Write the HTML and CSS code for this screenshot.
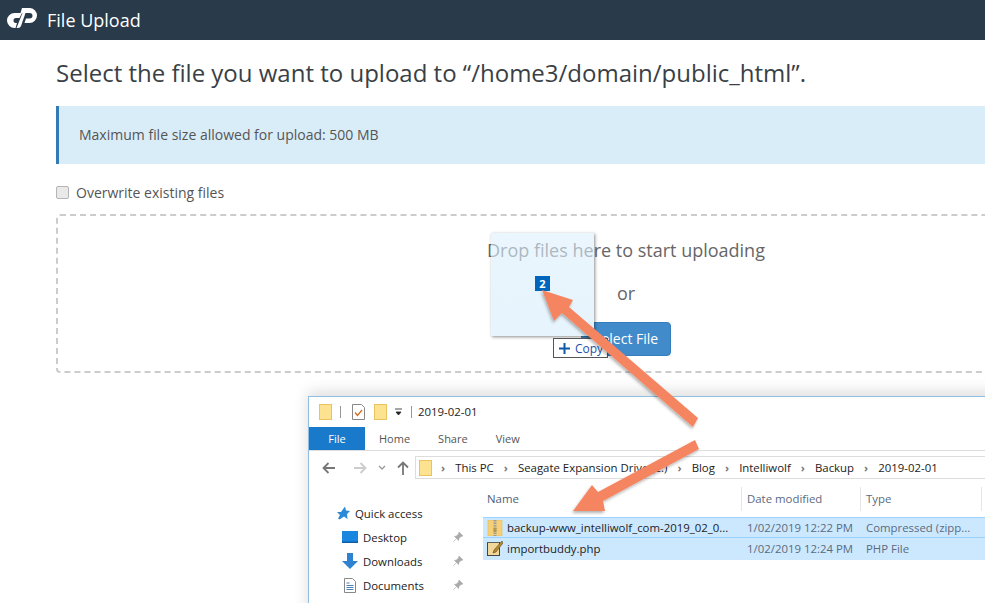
FILE: index.html
```html
<!DOCTYPE html>
<html lang="en">
<head>
    <meta charset="UTF-8">
    <title>File Upload</title>
    <link rel="stylesheet" href="styles.css">
</head>
<body>
    <header class="topbar">
        <svg class="logo" width="30" height="20" viewBox="0 0 30 20">
            <path fill="#fff" d="M15 5l-2.500 5H9a2.500 2.500 0 0 0 0 5h1l-1.500 5h-1a7.500 7.500 0 0 1 0-15z"/>
            <path fill="#fff" d="M15 0h7.500a7.500 7.500 0 0 1 0 15h-5l1.500-4.500h3.500a3 2.750 0 0 0 0-5.500h-4L14 18q-.7 2-3 2H9.500l6-15h-2z"/>
        </svg>
        <span class="topbar-title">File Upload</span>
    </header>

    <main class="content">
        <h1 class="page-title">Select the file you want to upload to “/home3/domain/public_html”.</h1>
        <div class="notice">Maximum file size allowed for upload: 500 MB</div>
        <label class="overwrite"><input type="checkbox" class="overwrite-box"> Overwrite existing files</label>
        <div class="dropzone">
            <div class="drop-text">Drop files here to start uploading</div>
            <div class="drop-or">or</div>
            <button class="select-btn">Select File</button>
        </div>
    </main>

    <div class="drag-ghost"><span class="drag-count">2</span></div>
    <div class="copy-tip">
        <svg width="11" height="11" viewBox="0 0 11 11"><path d="M5.500 0v11M0 5.500h11" stroke="#0a5aa8" stroke-width="2"/></svg>
        Copy
    </div>

    <section class="explorer">
        <div class="qat">
            <svg width="13" height="16" viewBox="0 0 13 16"><rect x=".5" y=".5" width="12" height="15" fill="#fde28f" stroke="#e8c35f"/></svg>
            <span class="qat-sep"></span>
            <svg class="qat-check" width="13" height="16" viewBox="0 0 13 16"><path d="M.5.5h9l3 3v12H.5z" fill="#fff" stroke="#888"/><path d="M3 8.500l2.500 3L10 6" fill="none" stroke="#d2691e" stroke-width="1.200"/></svg>
            <svg class="qat-folder" width="13" height="16" viewBox="0 0 13 16"><rect x=".5" y=".5" width="12" height="15" fill="#fde28f" stroke="#e8c35f"/></svg>
            <svg width="8" height="8" viewBox="0 0 8 8"><path d="M0 1h7M1 4h5l-2.500 3z" fill="#222" stroke="#222" stroke-width=".8"/></svg>
            <span class="qat-sep"></span>
            <span class="qat-title">2019-02-01</span>
        </div>
        <div class="tabs">
            <span class="tab tab-file">File</span>
            <span class="tab">Home</span>
            <span class="tab">Share</span>
            <span class="tab">View</span>
        </div>
        <div class="navbar">
            <div class="nav-btns">
                <svg width="14" height="12" viewBox="0 0 14 12"><path d="M13 6H2M6.500 1L1.500 6l5 5" fill="none" stroke="#777" stroke-width="1.800"/></svg>
                <svg class="nav-forward" width="14" height="12" viewBox="0 0 14 12"><path d="M1 6h11M7.500 1l5 5-5 5" fill="none" stroke="#ccc" stroke-width="1.800"/></svg>
                <svg width="8" height="6" viewBox="0 0 8 6"><path d="M1 1l3 3 3-3" fill="none" stroke="#999" stroke-width="1.300"/></svg>
                <svg width="12" height="14" viewBox="0 0 12 14"><path d="M6 14V2M1 6.500l5-5 5 5" fill="none" stroke="#777" stroke-width="1.800"/></svg>
            </div>
            <div class="address">
                <svg class="address-folder" width="13" height="16" viewBox="0 0 13 16"><rect x=".5" y=".5" width="12" height="15" fill="#fde28f" stroke="#e8c35f"/></svg>
                <span class="crumb-sep">›</span><span>This PC</span>
                <span class="crumb-sep">›</span><span>Seagate Expansion Drive (E:)</span>
                <span class="crumb-sep">›</span><span>Blog</span>
                <span class="crumb-sep">›</span><span>Intelliwolf</span>
                <span class="crumb-sep">›</span><span>Backup</span>
                <span class="crumb-sep">›</span><span>2019-02-01</span>
            </div>
        </div>
        <div class="panes">
            <nav class="tree">
                <div class="tree-head">
                    <svg width="14" height="14" viewBox="0 0 14 14"><path d="M9 .5l1 4 4 .5-3 3 .5 5L8 10.500 3.500 13.500 2 12.500l2-3.500L1 6h4z" fill="#2b8ad9"/></svg>
                    Quick access
                </div>
                <div class="tree-item">
                    <svg width="16" height="12" viewBox="0 0 16 12"><rect width="16" height="12" fill="#1a86e0"/><rect y="10.500" width="16" height="1.500" fill="#0f5fa8"/></svg>
                    <span class="tree-label">Desktop</span>
                    <svg class="pin" width="10" height="10" viewBox="0 0 10 10"><path d="M6 0l4 4-2 .5-2 2-.5 2L1.500 4.500l2-.5 2-2zM3 7L.5 9.500" fill="#aaa" stroke="#aaa" stroke-width=".6"/></svg>
                </div>
                <div class="tree-item">
                    <svg width="16" height="16" viewBox="0 0 16 16"><path d="M5 0h6v8h5l-8 8-8-8h5z" fill="#2e82d0"/></svg>
                    <span class="tree-label">Downloads</span>
                    <svg class="pin" width="10" height="10" viewBox="0 0 10 10"><path d="M6 0l4 4-2 .5-2 2-.5 2L1.500 4.500l2-.5 2-2zM3 7L.5 9.500" fill="#aaa" stroke="#aaa" stroke-width=".6"/></svg>
                </div>
                <div class="tree-item">
                    <svg width="16" height="15" viewBox="0 0 16 15"><path d="M2.500.5h8l3 3v11h-11z" fill="#fff" stroke="#888"/><path d="M4.500 5h3M4.500 7.500h7M4.500 9.500h7M4.500 11.500h7" stroke="#4a7fb5"/></svg>
                    <span class="tree-label">Documents</span>
                    <svg class="pin" width="10" height="10" viewBox="0 0 10 10"><path d="M6 0l4 4-2 .5-2 2-.5 2L1.500 4.500l2-.5 2-2zM3 7L.5 9.500" fill="#aaa" stroke="#aaa" stroke-width=".6"/></svg>
                </div>
            </nav>
            <div class="files">
                <div class="file-row file-header">
                    <span class="col col-name">Name</span>
                    <span class="col col-date">Date modified</span>
                    <span class="col col-type">Type</span>
                </div>
                <div class="file-row file-selected file-focus">
                    <span class="col col-name">
                        <svg width="16" height="16" viewBox="0 0 16 16"><rect x="1" width="14" height="16" fill="#f5d078" stroke="#e3b95a" stroke-width=".6"/><path d="M8 0v16" stroke="#9b9b9b" stroke-width="3" stroke-dasharray="1.500 1"/><rect x="6.500" y="8" width="3" height="4" fill="#b09a50"/></svg>
                        backup-www_intelliwolf_com-2019_02_0...
                    </span>
                    <span class="col col-date">1/02/2019 12:22 PM</span>
                    <span class="col col-type">Compressed (zipp...</span>
                </div>
                <div class="file-row file-selected file-plain">
                    <span class="col col-name">
                        <svg width="16" height="16" viewBox="0 0 16 16"><rect x=".5" y="2.500" width="12" height="13" fill="#f2d79a" stroke="#444"/><path d="M.5 2.500h12" stroke="#777" stroke-dasharray="1 1"/><path d="M15 1L7 10l-1 3 3-1 7-9z" fill="#b5892f" stroke="#5a4a1a" stroke-width=".6"/></svg>
                        importbuddy.php
                    </span>
                    <span class="col col-date">1/02/2019 12:24 PM</span>
                    <span class="col col-type">PHP File</span>
                </div>
            </div>
        </div>
    </section>

    <svg class="arrows" width="985" height="603" viewBox="0 0 985 603">
        <defs>
            <filter id="arrow-shadow" x="-10%" y="-10%" width="120%" height="120%">
                <feDropShadow dx="-1" dy="2" stdDeviation="1.500" flood-color="#000" flood-opacity=".3"/>
            </filter>
        </defs>
        <polygon class="arrow" filter="url(#arrow-shadow)" points="542,290 573,300 569,307 698,418 693,427 562,313 554,321"/>
        <polygon class="arrow" filter="url(#arrow-shadow)" points="573,511 592,485 598,492 695,440 699,449 603,501 605,511"/>
    </svg>
</body>
</html>
```

FILE: styles.css
```css
html, body {
    margin: 0;
    height: 100%;
    overflow: hidden;
}

body {
    position: relative;
    background: #fff;
    font-family: "Open Sans", sans-serif;
    color: #333;
}

.topbar {
    display: flex;
    align-items: center;
    height: 40px;
    padding-left: 7px;
    background: #293a4a;
    color: #fff;
}

.logo {
    margin: 0 10px 4px 0;
}

.topbar-title {
    font-size: 18px;
}

.content {
    width: 1140px;
    margin-left: 56px;
}

.page-title {
    margin: 0;
    padding-top: 16px;
    font-size: 24px;
    font-weight: 400;
    line-height: 34px;
    color: #3a3f45;
    white-space: nowrap;
}

.notice {
    margin-top: 16px;
    height: 58px;
    padding-left: 20px;
    border-left: 3px solid #337ab7;
    background: #d9edf9;
    font-size: 14px;
    line-height: 58px;
    color: #555;
    box-sizing: border-box;
}

.overwrite {
    display: flex;
    align-items: center;
    height: 20px;
    margin-top: 18px;
    font-size: 14px;
    color: #555;
}

.overwrite-box {
    appearance: none;
    width: 13px;
    height: 13px;
    margin: 0 7px 0 0;
    border: 1px solid #b5b5b5;
    border-radius: 2px;
    background: #e9e9e9;
    box-sizing: border-box;
}

.dropzone {
    margin-top: 12px;
    height: 159px;
    box-sizing: border-box;
    border: 2px dashed #ccc;
    border-radius: 4px;
    text-align: center;
}

.drop-text {
    margin-top: 19px;
    font-size: 18px;
    line-height: 30px;
    color: #666;
}

.drop-or {
    margin-top: 13px;
    font-size: 18px;
    line-height: 30px;
    color: #666;
}

.select-btn {
    display: block;
    width: 90px;
    height: 34px;
    margin: 14px auto 0;
    padding: 0 0 2px;
    border: 1px solid #357ebd;
    border-radius: 4px;
    background: #428bca;
    color: #fff;
    font-family: inherit;
    font-size: 14px;
}

.drag-ghost {
    position: absolute;
    left: 491px;
    top: 233px;
    width: 103px;
    height: 103px;
    display: flex;
    justify-content: center;
    padding-top: 43px;
    box-sizing: border-box;
    background: linear-gradient(rgba(218,238,252,0.55), rgba(222,240,252,0.7) 55%, rgba(230,244,253,0.97) 85%);
    box-shadow: 1px 1px 3px rgba(0,0,0,0.45);
}

.drag-count {
    width: 15px;
    height: 15px;
    background: #0066bb;
    color: #fff;
    font-size: 11px;
    font-weight: 700;
    line-height: 15px;
    text-align: center;
}

.copy-tip {
    position: absolute;
    left: 553px;
    top: 338px;
    display: flex;
    align-items: center;
    gap: 5px;
    width: 55px;
    height: 20px;
    box-sizing: border-box;
    padding-left: 5px;
    border: 1px solid #555;
    background: #fff;
    font-size: 12px;
    color: #1c4fa8;
    white-space: nowrap;
    overflow: hidden;
}

.explorer {
    position: absolute;
    left: 308px;
    top: 396px;
    width: 700px;
    height: 230px;
    border: 1px solid #8fc0e4;
    background: #fff;
    font-size: 11.4px;
    color: #222;
    box-shadow: 0 -4px 14px rgba(0,0,0,0.14);
}

.qat {
    display: flex;
    align-items: center;
    gap: 8px;
    height: 30px;
    padding: 0 0 1px 10px;
    box-sizing: border-box;
}

.qat-sep {
    width: 1px;
    height: 12px;
    background: #999;
}

.qat-check {
    margin-left: 3px;
}

.qat-folder {
    margin-left: 1px;
}

.qat-title {
    margin-left: -2px;
}

.tabs {
    display: flex;
    height: 23px;
    border-bottom: 1px solid #ddd;
    color: #555;
}

.tab {
    padding: 0 14px;
    line-height: 23px;
    font-size: 11px;
}

.tab-file {
    width: 56px;
    box-sizing: border-box;
    padding: 0;
    text-align: center;
    background: #1979ca;
    color: #fff;
}

.navbar {
    display: flex;
    align-items: center;
    height: 27px;
    padding-top: 3px;
}

.nav-btns {
    display: flex;
    align-items: center;
    gap: 11px;
    width: 106px;
    padding-left: 13px;
    box-sizing: border-box;
}

.nav-forward {
    margin-left: 6px;
}

.address {
    display: flex;
    align-items: center;
    gap: 10px;
    flex: 1;
    height: 21px;
    padding-left: 3px;
    border: 1px solid #ddd;
    white-space: nowrap;
}

.address-folder {
    margin-right: -1px;
}

.crumb-sep {
    color: #777;
    font-weight: 700;
}

.panes {
    display: flex;
}

.tree {
    width: 174px;
    padding: 20px 0 0 27px;
    box-sizing: border-box;
}

.tree-head, .tree-item {
    display: flex;
    align-items: center;
    height: 24px;
    gap: 5px;
}

.tree-item {
    padding-left: 6px;
}

.tree-label {
    width: 85px;
}

.files {
    flex: 1;
}

.file-row {
    display: flex;
    align-items: center;
    height: 21px;
}

.file-header {
    height: 34px;
    padding-top: 2px;
    margin-bottom: 2px;
    box-sizing: border-box;
    color: #4c607a;
}

.file-header .col {
    height: 24px;
    line-height: 24px;
    border-right: 1px solid #e5e5e5;
}

.file-selected {
    background: #cce8ff;
}

.file-focus {
    border-top: 1px solid #99d1ff;
    border-bottom: 1px solid #99d1ff;
    box-sizing: border-box;
}

.file-plain {
    height: 22px;
    padding-bottom: 2px;
    box-sizing: border-box;
}

.col {
    display: flex;
    align-items: center;
    gap: 4px;
    box-sizing: border-box;
    padding-left: 4px;
    white-space: nowrap;
    overflow: hidden;
}

.col-name {
    width: 259px;
}

.col-date {
    width: 119px;
    padding-left: 5px;
    color: #5a6b80;
}

.col-type {
    width: 121px;
    padding-left: 5px;
    color: #5a6b80;
}

.arrows {
    position: absolute;
    left: 0;
    top: 0;
    pointer-events: none;
}

.arrow {
    fill: #f58560;
}
```
